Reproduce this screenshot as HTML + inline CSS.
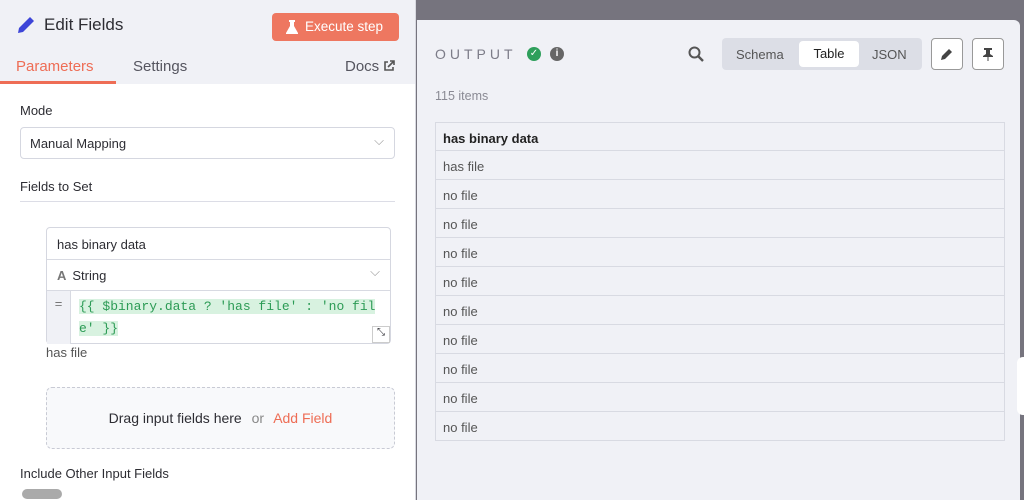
<!DOCTYPE html>
<html style="background:#76747e"><head><style>
*{box-sizing:border-box;margin:0;padding:0}
body{width:1024px;height:493px;overflow:hidden;background:#76747e;font-family:"Liberation Sans",sans-serif;position:relative;color:#2d2d33}
.left{position:absolute;left:0;top:0;width:416px;height:500px;background:#fff;border-right:1px solid #d8d9e0}
.head{height:84px;background:#f0f1f6;position:relative}
.title{position:absolute;left:44px;top:15px;font-size:17px;color:#2d2d33}
.exec{position:absolute;left:272px;top:13px;width:127px;height:28px;background:#ee7760;border-radius:4px;color:#fff;font-size:13.5px;line-height:28px;padding-left:33px}
.tab{position:absolute;top:58px;font-size:15px}
.right{position:absolute;left:417px;top:20px;width:603px;height:480px;background:#f0f1f6;border-top-right-radius:6px}
.lbl{position:absolute;font-size:13px;color:#2d2d33}
.box{position:absolute;border:1px solid #d5d7e0;background:#fff}
.row{position:absolute;left:18px;width:570px;height:29px;border:1px solid #d8dae2;border-top:none;font-size:13px;color:#555;padding:8px 7px;background:#f0f1f6}
</style></head><body>
<div class="left">
 <div class="head">
  <svg style="position:absolute;left:16px;top:15px" width="20" height="20" viewBox="0 0 20 20"><path d="M2 18l1-5L14 2l4 4L7 17z" fill="#3d45d8"/></svg>
  <div class="title">Edit Fields</div>
  <div class="exec"><svg style="position:absolute;left:14px;top:7px" width="12" height="14" viewBox="0 0 12 14"><path d="M3 0h6v2H8v4l4 7v1H0v-1l4-7V2H3z" fill="#fff"/></svg>Execute step</div>
  <div class="tab" style="left:16px;color:#ee6d55">Parameters</div>
  <div style="position:absolute;left:0;top:81px;width:116px;height:3px;background:#ee6d55"></div>
  <div class="tab" style="left:133px;color:#55555f">Settings</div>
  <div class="tab" style="left:345px;color:#55555f">Docs <svg width="12" height="12" viewBox="0 0 12 12" style="vertical-align:-1px"><path d="M5 2H2v8h8V7" stroke="#555" stroke-width="1.6" fill="none"/><path d="M7 1h4v4M11 1L5 7" stroke="#555" stroke-width="1.6" fill="none"/></svg></div>
 </div>
 <div class="lbl" style="left:20px;top:103px">Mode</div>
 <div class="box" style="left:20px;top:127px;width:375px;height:32px;border-radius:4px;font-size:13px;padding:8px 9px">Manual Mapping<span style="position:absolute;right:10px;top:5px;color:#999">⌵</span></div>
 <div class="lbl" style="left:20px;top:179px">Fields to Set</div>
 <div style="position:absolute;left:20px;top:201px;width:375px;height:1px;background:#dcdde6"></div>
 <div class="box" style="left:46px;top:227px;width:345px;height:117px;border-radius:4px">
  <div style="height:32px;border-bottom:1px solid #d8dae2;font-size:13px;padding:9px 10px">has binary data</div>
  <div style="height:31px;border-bottom:1px solid #d8dae2;font-size:13px;padding:8px 10px;position:relative"><b style="color:#777;margin-right:6px">A</b>String<span style="position:absolute;right:10px;top:4px;color:#999">⌵</span></div>
  <div style="position:absolute;left:0;top:63px;width:24px;height:53px;background:#f0f1f6;border-right:1px solid #d8dae2;color:#777;font-size:13px;text-align:center;padding-top:5px">=</div>
  <div style="position:absolute;left:32px;top:68px;width:300px;font-family:'Liberation Mono',monospace;font-size:13px;line-height:22px;color:#2c9b55"><span style="background:#d8f2e0">{{ $binary.data ? 'has file' : 'no fil</span><br><span style="background:#d8f2e0">e' }}</span></div>
  <div style="position:absolute;right:0;bottom:0;width:18px;height:17px;border:1px solid #ccc;font-size:10px;text-align:center;background:#fff">⤡</div>
 </div>
 <div class="lbl" style="left:46px;top:345px;color:#555">has file</div>
 <div style="position:absolute;left:46px;top:387px;width:349px;height:62px;border:1px dashed #c8cad4;border-radius:6px;background:#f8f9fb;text-align:center;font-size:14px;line-height:60px">Drag input fields here <span style="color:#888;margin:0 6px">or</span> <span style="color:#ee6d55">Add Field</span></div>
 <div class="lbl" style="left:20px;top:466px">Include Other Input Fields</div>
 <div style="position:absolute;left:22px;top:489px;width:40px;height:10px;border-radius:5px;background:#aaa"></div>
</div>
<div class="right">
 <div style="position:absolute;left:18px;top:26px;font-size:14px;letter-spacing:4px;color:#7c7c88">OUTPUT</div>
 <div style="position:absolute;left:110px;top:27px;width:14px;height:14px;border-radius:50%;background:#2e9f5b;color:#fff;font-size:10px;text-align:center;line-height:14px">✓</div>
 <div style="position:absolute;left:133px;top:27px;width:14px;height:14px;border-radius:50%;background:#666;color:#fff;font-size:10px;font-weight:bold;text-align:center;line-height:14px">i</div>
 <svg style="position:absolute;left:271px;top:26px" width="16" height="16" viewBox="0 0 16 16"><circle cx="6.5" cy="6.5" r="5" stroke="#555" stroke-width="2" fill="none"/><path d="M10 10l5 5" stroke="#555" stroke-width="2.4"/></svg>
 <div style="position:absolute;left:305px;top:18px;width:200px;height:32px;background:#dcdee6;border-radius:4px;font-size:13px;color:#555">
  <span style="position:absolute;left:14px;top:9px">Schema</span>
  <div style="position:absolute;left:77px;top:3px;width:60px;height:26px;background:#fff;border-radius:4px;color:#222;text-align:center;line-height:26px">Table</div>
  <span style="position:absolute;left:150px;top:9px">JSON</span>
 </div>
 <div style="position:absolute;left:514px;top:18px;width:32px;height:32px;border:1px solid #999;border-radius:4px;background:#fff"><svg style="margin:8px" width="14" height="14" viewBox="0 0 14 14"><path d="M1 13l1-4 7-7 3 3-7 7z" fill="#444"/></svg></div>
 <div style="position:absolute;left:555px;top:18px;width:32px;height:32px;border:1px solid #999;border-radius:4px;background:#fff"><svg style="margin:8px" width="14" height="14" viewBox="0 0 14 14"><path d="M3 1h8v2H9v4l3 2v1H2V9l3-2V3H3zM6.5 10h1v4h-1z" fill="#444"/></svg></div>
 <div style="position:absolute;left:18px;top:69px;font-size:12.5px;color:#8a8a94">115 items</div>
 <div class="row" style="top:102px;border-top:1px solid #d8dae2;font-weight:bold;color:#222">has binary data</div>
 <div class="row" style="top:131px">has file</div>
 <div class="row" style="top:160px">no file</div>
 <div class="row" style="top:189px">no file</div>
 <div class="row" style="top:218px">no file</div>
 <div class="row" style="top:247px">no file</div>
 <div class="row" style="top:276px">no file</div>
 <div class="row" style="top:305px">no file</div>
 <div class="row" style="top:334px">no file</div>
 <div class="row" style="top:363px">no file</div>
 <div class="row" style="top:392px">no file</div>
</div>
<div style="position:absolute;left:1017px;top:357px;width:7px;height:58px;background:#fff;border-radius:6px 0 0 6px"></div>
</body></html>
